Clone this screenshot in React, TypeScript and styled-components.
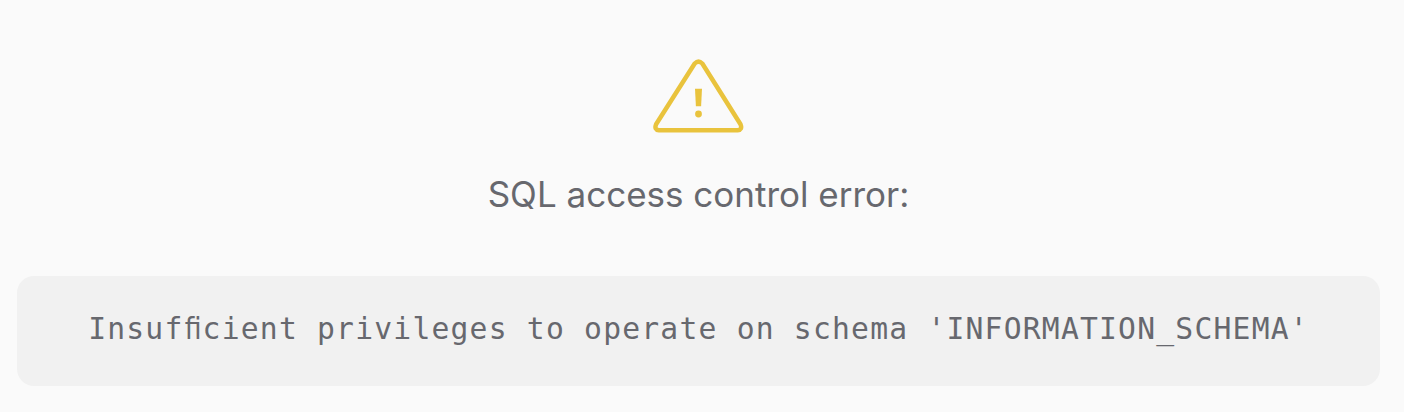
import React from "react";
import styled, { createGlobalStyle } from "styled-components";

const GlobalStyle = createGlobalStyle`
  body {
    margin: 0;
    background: #fafafa;
  }
`;

const ErrorPanel = styled.main`
  box-sizing: border-box;
  height: 412px;
  padding: 59px 24px 0 17px;
  display: flex;
  flex-direction: column;
  align-items: center;
  overflow: hidden;
  background: #fafafa;
  color: #67686e;
`;

const WarningIcon = styled.svg`
  display: block;
  flex: none;
  width: 91px;
  height: 74px;
`;

const Title = styled.h1`
  margin: 39px 0 0;
  font: 400 35px/44px Inter, sans-serif;
  white-space: nowrap;
`;

const Message = styled.div`
  box-sizing: border-box;
  align-self: stretch;
  height: 110px;
  margin-top: 60px;
  padding-bottom: 4px;
  display: flex;
  align-items: center;
  justify-content: center;
  border-radius: 17px;
  background: #f1f1f1;
`;

const Code = styled.code`
  font: 400 29.7px/40px "DejaVu Sans Mono", monospace;
  letter-spacing: 1.2px;
  white-space: pre;
`;

/* Joins a letter pair into a single monospace cell. */
const Ligature = styled.span`
  display: inline-block;
  width: 19.08px;
  font-family: "DejaVu Sans Condensed", "DejaVu Sans", sans-serif;
  font-stretch: condensed;
  font-variant-ligatures: common-ligatures;
  letter-spacing: 0;
  text-align: center;
`;

export default function App() {
  return (
    <>
      <GlobalStyle />
      <ErrorPanel>
        <WarningIcon viewBox="0.5 0 91 74" fill="none" aria-hidden="true">
          <path
            d="M42.2 4.5Q46 0.8 49.8 4.5L88 65.2Q90.2 70.8 85.1 71.3H6.5Q1.4 70.8 3.6 65.2Z"
            stroke="#e9c33d"
            strokeWidth="4.5"
            strokeLinejoin="round"
          />
          <path d="M42.5 29.7H49.5L48.6 47.3H43.4Z" fill="#e9c33d" />
          <circle cx="46" cy="55" r="3.4" fill="#e9c33d" />
        </WarningIcon>
        <Title>SQL access control error:</Title>
        <Message>
          <Code>
            Insuf<Ligature>fi</Ligature>cient privileges to operate on schema 'INFORMATION_SCHEMA'
          </Code>
        </Message>
      </ErrorPanel>
    </>
  );
}
